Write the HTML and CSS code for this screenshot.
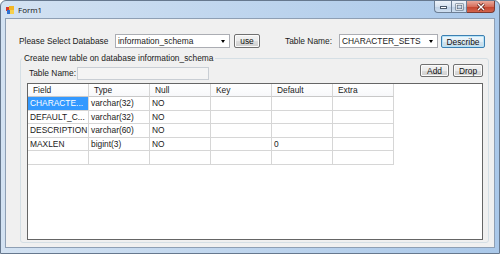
FILE: index.html
```html
<!DOCTYPE html>
<html lang="en">
<head>
    <meta charset="UTF-8">
    <title>Form1</title>
    <link rel="stylesheet" href="styles.css">
</head>
<body>

    <div class="window">
        <!-- Barra de titulo -->
        <div class="titlebar">
            <svg class="app-icon" width="8" height="8" viewBox="0 0 8 8">
                <rect x="0" y="1" width="4" height="4" fill="#d9372b"/>
                <rect x="3" y="0" width="5" height="4" fill="#f2b623"/>
                <rect x="1" y="4" width="4" height="4" fill="#2d6fd0"/>
                <rect x="4" y="4" width="4" height="4" fill="#f6d04d"/>
            </svg>
            <span class="title">Form1</span>
            <div class="caption-buttons">
                <span class="cap cap-min">
                    <svg width="9" height="6" viewBox="0 0 9 6"><rect x="1.5" y="2.5" width="6" height="2" fill="#fff" stroke="#4b5a6b"/></svg>
                </span>
                <span class="cap cap-max">
                    <svg width="9" height="8" viewBox="0 0 9 8"><rect x="1.5" y="1.5" width="6" height="5" fill="none" stroke="#4b5a6b" stroke-width="2"/><rect x="1.5" y="1.5" width="6" height="5" fill="none" stroke="#fff" stroke-width="0.8"/></svg>
                </span>
                <span class="cap cap-close">
                    <svg width="10" height="8" viewBox="0 0 10 8"><path d="M2 1 L8 7 M8 1 L2 7" stroke="#5a1e16" stroke-width="3"/><path d="M2 1 L8 7 M8 1 L2 7" stroke="#fff" stroke-width="1.4"/></svg>
                </span>
            </div>
        </div>

        <div class="client">
            <!-- Seleccion de base de datos y tabla -->
            <div class="db-row">
                <span class="lbl lbl-db">Please Select Database</span>
                <div class="combo combo-db">information_schema<i class="arrow"></i></div>
                <button class="btn btn-use">use</button>
                <span class="lbl lbl-table">Table Name:</span>
                <div class="combo combo-table">CHARACTER_SETS<i class="arrow"></i></div>
                <button class="btn btn-describe">Describe</button>
            </div>

            <!-- Crear tabla nueva -->
            <fieldset class="group">
                <legend>Create new table on database information_schema</legend>
                <div class="new-row">
                    <span class="lbl lbl-new">Table Name:</span>
                    <div class="textbox"></div>
                    <button class="btn btn-add">Add</button>
                    <button class="btn btn-drop">Drop</button>
                </div>

                <div class="grid">
                    <div class="grid-row head">
                        <div class="cell">Field</div>
                        <div class="cell">Type</div>
                        <div class="cell">Null</div>
                        <div class="cell">Key</div>
                        <div class="cell">Default</div>
                        <div class="cell">Extra</div>
                    </div>
                    <div class="grid-row">
                        <div class="cell selected">CHARACTE...</div>
                        <div class="cell">varchar(32)</div>
                        <div class="cell">NO</div>
                        <div class="cell"></div>
                        <div class="cell"></div>
                        <div class="cell"></div>
                    </div>
                    <div class="grid-row">
                        <div class="cell">DEFAULT_C...</div>
                        <div class="cell">varchar(32)</div>
                        <div class="cell">NO</div>
                        <div class="cell"></div>
                        <div class="cell"></div>
                        <div class="cell"></div>
                    </div>
                    <div class="grid-row">
                        <div class="cell">DESCRIPTION</div>
                        <div class="cell">varchar(60)</div>
                        <div class="cell">NO</div>
                        <div class="cell"></div>
                        <div class="cell"></div>
                        <div class="cell"></div>
                    </div>
                    <div class="grid-row">
                        <div class="cell">MAXLEN</div>
                        <div class="cell">bigint(3)</div>
                        <div class="cell">NO</div>
                        <div class="cell"></div>
                        <div class="cell">0</div>
                        <div class="cell"></div>
                    </div>
                    <div class="grid-row">
                        <div class="cell"></div>
                        <div class="cell"></div>
                        <div class="cell"></div>
                        <div class="cell"></div>
                        <div class="cell"></div>
                        <div class="cell"></div>
                    </div>
                </div>
            </fieldset>
        </div>
    </div>

</body>
</html>
```

FILE: styles.css
```css
/* General */
* {
    box-sizing: border-box;
}

body {
    margin: 0;
    width: 500px;
    height: 254px;
    overflow: hidden;
    background: #fff;
    font-family: "Liberation Sans", Arial, sans-serif;
    font-size: 8.4px;
    color: #1a1a1a;
}

/* Ventana estilo Windows 7 */
.window {
    width: 500px;
    height: 254px;
    border: 1px solid #66788e;
    border-radius: 6px 6px 0 0;
    background: linear-gradient(90deg, #d3e2f2 0%, #c0d6ee 45%, #aac8e9 100%);
    padding: 0 4px 5px 4px;
    display: flex;
    flex-direction: column;
}

.titlebar {
    height: 17px;
    display: flex;
    align-items: center;
}

.app-icon {
    margin-left: 1px;
}

.title {
    margin-left: 4px;
    font-family: "Open Sans", "Liberation Sans", sans-serif;
    font-size: 8px;
    color: #111;
}

.caption-buttons {
    margin-left: auto;
    align-self: flex-start;
    display: flex;
    height: 12px;
}

.cap {
    display: flex;
    align-items: center;
    justify-content: center;
    height: 12px;
    border: 1px solid #6d7f95;
    border-top: none;
    background: linear-gradient(#eef3f9 0%, #d4e1ef 50%, #bccee3 51%, #cfdff0 100%);
}

.cap-min {
    width: 17px;
    border-right: none;
    border-radius: 0 0 0 4px;
}

.cap-max {
    width: 16px;
}

.cap-close {
    width: 28px;
    border-left: none;
    border-color: #7c3a32;
    border-radius: 0 0 4px 0;
    background: linear-gradient(#e9a99b 0%, #d7705d 50%, #c2422c 51%, #d3644c 100%);
}

/* Area cliente */
.client {
    flex: 1;
    border: 1px solid #8e9fb4;
    background: #f0f0f0;
}

.lbl {
    line-height: 13px;
    white-space: nowrap;
}

.db-row {
    display: flex;
    align-items: center;
    height: 14px;
    margin-top: 15px;
    padding-left: 13px;
}

.lbl-db {
    width: 96px;
}

.combo {
    position: relative;
    height: 14px;
    line-height: 12px;
    padding-left: 2px;
    background: #fff;
    border: 1px solid #abadb3;
    white-space: nowrap;
}

.combo-db {
    width: 115px;
}

.combo-table {
    width: 99px;
}

/* flecha del combo */
.arrow {
    position: absolute;
    right: 4px;
    top: 5px;
    border-left: 2.5px solid transparent;
    border-right: 2.5px solid transparent;
    border-top: 3px solid #000;
}

.btn {
    font-family: inherit;
    font-size: 8.4px;
    color: #111;
    padding: 0;
    height: 14px;
    line-height: 12px;
    border: 1px solid #707070;
    border-radius: 2px;
    background: linear-gradient(#f2f2f2 0%, #ebebeb 50%, #dddddd 51%, #cfcfcf 100%);
    box-shadow: inset 0 0 0 1px #fbfbfb;
}

.btn-use {
    width: 26px;
    margin-left: 4px;
}

.lbl-table {
    width: 54px;
    margin-left: 25px;
}

.btn-describe {
    width: 44px;
    height: 13px;
    margin-left: 3px;
    border-color: #3c7fb1;
    box-shadow: inset 0 0 0 1px #b6e3f8;
    background: linear-gradient(#eef6fb 0%, #e3eef6 50%, #d3e3ee 51%, #c6dae8 100%);
}

/* Grupo */
.group {
    width: 469px;
    margin: 4px 0 0 14px;
    padding: 0 5px 2px 6px;
    border: 1px solid #d5dfe5;
    border-radius: 3px;
}

.group legend {
    margin-left: -5px;
    padding: 0 2px;
    line-height: 12px;
}

.new-row {
    display: flex;
    align-items: flex-start;
    height: 16px;
}

.lbl-new {
    width: 48px;
    margin: 3px 0 0 2px;
}

.textbox {
    width: 132px;
    height: 13px;
    margin-top: 3px;
    background: #f4f4f4;
    border: 1px solid #c9ced4;
}

.btn-add {
    width: 29px;
    height: 13px;
    margin-left: auto;
}

.btn-drop {
    width: 30px;
    height: 13px;
    margin-left: 4px;
}

/* Tabla de campos */
.grid {
    width: 456px;
    height: 157px;
    margin-top: 3px;
    border: 1px solid #656565;
    background: #fff;
}

.grid-row {
    display: grid;
    grid-template-columns: repeat(6, 61px);
}

.cell {
    height: 13.5px;
    line-height: 12.5px;
    padding-left: 2px;
    border-right: 1px solid #d6d6d6;
    border-bottom: 1px solid #d6d6d6;
    white-space: nowrap;
    overflow: hidden;
}

.head .cell {
    height: 13px;
    line-height: 12px;
    padding-left: 5px;
    border-bottom-color: #c8c8c8;
    background: linear-gradient(#ffffff, #f7f8fa);
}

.cell.selected {
    background: #3399ff;
    color: #fff;
}
```
